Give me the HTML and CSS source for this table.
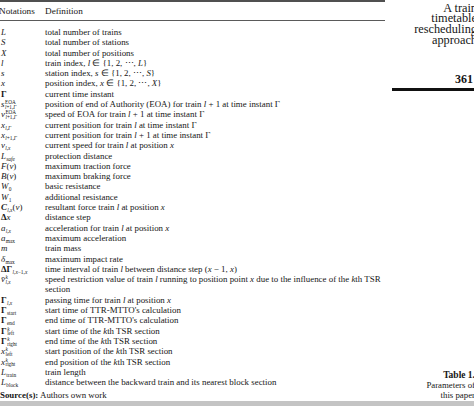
FILE: index.html
```html
<!DOCTYPE html>
<html>
<head>
<meta charset="utf-8">
<link rel="stylesheet" href="styles.css">
</head>
<body>
<div class="page">
  <div class="table">
    <div class="head"><span class="hn">Notations</span><span>Definition</span></div>
    <div class="rows">
      <div class="row"><span class="n"><i>L</i></span><span>total number of trains</span></div>
      <div class="row"><span class="n"><i>S</i></span><span>total number of stations</span></div>
      <div class="row"><span class="n"><i>X</i></span><span>total number of positions</span></div>
      <div class="row"><span class="n"><i>l</i></span><span>train index, <i>l</i> ∈ {1, 2, ⋯, <i>L</i>}</span></div>
      <div class="row"><span class="n"><i>s</i></span><span>station index, <i>s</i> ∈ {1, 2, ⋯, <i>S</i>}</span></div>
      <div class="row"><span class="n"><i>x</i></span><span>position index, <i>x</i> ∈ {1, 2, ⋯, <i>X</i>}</span></div>
      <div class="row"><span class="n"><b>Γ</b></span><span>current time instant</span></div>
      <div class="row"><span class="n"><i>s</i><span class="ss"><span>EOA</span><span><i>l</i>+1,<i>Γ</i></span></span></span><span>position of end of Authority (EOA) for train <i>l</i> + 1 at time instant Γ</span></div>
      <div class="row"><span class="n"><i>v</i><span class="ss"><span>EOA</span><span><i>l</i>+1,<i>Γ</i></span></span></span><span>speed of EOA for train <i>l</i> + 1 at time instant Γ</span></div>
      <div class="row"><span class="n"><i>x</i><span class="sb"><i>l</i>,<i>Γ</i></span></span><span>current position for train <i>l</i> at time instant Γ</span></div>
      <div class="row"><span class="n"><i>x</i><span class="sb"><i>l</i>+1,<i>Γ</i></span></span><span>current position for train <i>l</i> + 1 at time instant Γ</span></div>
      <div class="row"><span class="n"><i>v</i><span class="sb"><i>l</i>,<i>x</i></span></span><span>current speed for train <i>l</i> at position <i>x</i></span></div>
      <div class="row"><span class="n"><i>L</i><span class="sb"><i>safe</i></span></span><span>protection distance</span></div>
      <div class="row"><span class="n"><i>F</i>(<i>v</i>)</span><span>maximum traction force</span></div>
      <div class="row"><span class="n"><i>B</i>(<i>v</i>)</span><span>maximum braking force</span></div>
      <div class="row"><span class="n"><i>W</i><span class="sb">0</span></span><span>basic resistance</span></div>
      <div class="row"><span class="n"><i>W</i><span class="sb">1</span></span><span>additional resistance</span></div>
      <div class="row"><span class="n"><b><i>C</i></b><span class="sb"><i>l</i>,<i>x</i></span>(<i>v</i>)</span><span>resultant force train <i>l</i> at position <i>x</i></span></div>
      <div class="row"><span class="n"><b>Δ</b><i>x</i></span><span>distance step</span></div>
      <div class="row"><span class="n"><i>a</i><span class="sb"><i>l</i>,<i>x</i></span></span><span>acceleration for train <i>l</i> at position <i>x</i></span></div>
      <div class="row"><span class="n"><i>a</i><span class="sb">max</span></span><span>maximum acceleration</span></div>
      <div class="row"><span class="n"><i>m</i></span><span>train mass</span></div>
      <div class="row"><span class="n"><i>δ</i><span class="sb">max</span></span><span>maximum impact rate</span></div>
      <div class="row"><span class="n"><b>ΔΓ</b><span class="sb"><i>l</i>,<i>x</i>−1,<i>x</i></span></span><span>time interval of train <i>l</i> between distance step (<i>x</i> − 1, <i>x</i>)</span></div>
      <div class="row"><span class="n"><i>v̄</i><span class="ss"><span><i>k</i></span><span><i>l</i>,<i>x</i></span></span></span><span>speed restriction value of train <i>l</i> running to position point <i>x</i> due to the influence of the <i>k</i>th TSR section</span></div>
      <div class="row"><span class="n"><b>Γ</b><span class="sb"><i>l</i>,<i>x</i></span></span><span>passing time for train <i>l</i> at position <i>x</i></span></div>
      <div class="row"><span class="n"><b>Γ</b><span class="sb">start</span></span><span>start time of TTR-MTTO's calculation</span></div>
      <div class="row"><span class="n"><b>Γ</b><span class="sb">end</span></span><span>end time of TTR-MTTO's calculation</span></div>
      <div class="row"><span class="n"><b>Γ</b><span class="ss"><span><i>k</i></span><span>left</span></span></span><span>start time of the <i>k</i>th TSR section</span></div>
      <div class="row"><span class="n"><b>Γ</b><span class="ss"><span><i>k</i></span><span>right</span></span></span><span>end time of the <i>k</i>th TSR section</span></div>
      <div class="row"><span class="n"><i>x</i><span class="ss"><span><i>k</i></span><span>left</span></span></span><span>start position of the <i>k</i>th TSR section</span></div>
      <div class="row"><span class="n"><i>x</i><span class="ss"><span><i>k</i></span><span>right</span></span></span><span>end position of the <i>k</i>th TSR section</span></div>
      <div class="row"><span class="n"><i>L</i><span class="sb">train</span></span><span>train length</span></div>
      <div class="row"><span class="n"><i>L</i><span class="sb">block</span></span><span>distance between the backward train and its nearest block section</span></div>
    </div>
    <div class="source"><b>Source(s):</b> Authors own work</div>
  </div>
  <div class="aside">
    <div class="title">A train<br>timetable<br>rescheduling<br>approach</div>
    <div class="pageno">361</div>
    <div class="rule"></div>
    <div class="caption"><b>Table 1.</b><br>Parameters of<br>this paper</div>
  </div>
</div>
<div class="bar"></div>
</body>
</html>
```
FILE: styles.css
```css
html, body {
  margin: 0;
  padding: 0;
  overflow: hidden;
  background: #fff;
}
body {
  width: 474px;
  height: 406px;
  font-family: "Liberation Serif", "Times New Roman", serif;
  color: #161616;
}
.page {
  display: flex;
  width: 477px;
  align-items: stretch;
}
.table {
  width: 385px;
  flex: none;
  border-top: 2px solid #505050;
  font-size: 8.9px;
  line-height: 10.3px;
}
.head {
  display: grid;
  grid-template-columns: 45px 1fr;
  height: 18px;
  align-items: center;
  border-bottom: 1px solid #5a5a5a;
  font-size: 9.2px;
}
.hn {
  margin-left: -1px;
}
.rows {
  padding-top: 6px;
}
.row {
  display: grid;
  grid-template-columns: 45px 1fr;
}
.n {
  height: 10.3px;
  white-space: nowrap;
  padding-left: 1px;
}
.ss {
  display: inline-flex;
  flex-direction: column;
  font-size: 5.2px;
  line-height: 4.6px;
  vertical-align: 3px;
  margin-left: 0.5px;
}
.sb {
  font-size: 5.4px;
  line-height: 0;
  vertical-align: -2px;
  margin-left: 0.3px;
}
.source {
  margin-top: 2.5px;
}
.aside {
  flex: 1;
  display: flex;
  flex-direction: column;
  align-items: flex-end;
  text-align: right;
}
.title {
  font-size: 12.3px;
  line-height: 10.7px;
  padding-top: 2.5px;
}
.pageno {
  font-weight: bold;
  font-size: 12px;
  line-height: 12px;
  margin-top: 27.7px;
  margin-right: 4px;
}
.rule {
  align-self: stretch;
  margin-left: 7px;
  height: 3px;
  margin-top: 3px;
  background: #111;
}
.caption {
  margin-top: auto;
  margin-right: 2px;
  font-size: 8.8px;
  line-height: 10px;
}
.caption b {
  font-size: 9.5px;
}
.bar {
  height: 5px;
  margin-top: 0.7px;
  background: #c4c4c4;
}
```
